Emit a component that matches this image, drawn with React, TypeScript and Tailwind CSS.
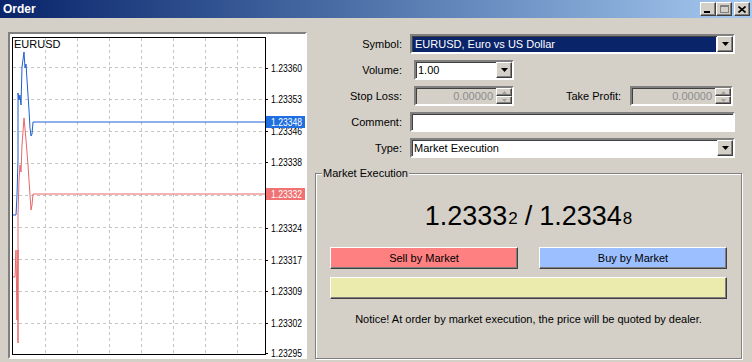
import React from 'react';

const raised = 'border border-t-white border-l-white border-r-[#404040] border-b-[#404040] shadow-[inset_-1px_-1px_0_#808080]';
const sunken = 'border-2 border-t-[#808080] border-l-[#808080] border-r-white border-b-white shadow-[inset_1px_1px_0_#404040]';

const priceLabels = [
    { y: 68, text: '1.23360' },
    { y: 99, text: '1.23353' },
    { y: 131, text: '1.23346' },
    { y: 162, text: '1.23338' },
    { y: 228, text: '1.23324' },
    { y: 260, text: '1.23317' },
    { y: 291, text: '1.23309' },
    { y: 323, text: '1.23302' },
    { y: 353, text: '1.23295' },
];

const gridX = [45, 77, 109, 141, 173, 205, 237];
const gridY = [67, 99, 131, 163, 195, 227, 259, 291, 323];

const bluePath = 'M13,215 L16,215 L17,195 L18,160 L18,93 L19,100 L20,95 L21,105 L22,67 L24,52 L25,68 L26,64 L27,80 L29,110 L30,128 L31,136 L32,134 L33,122 L265,122';
const redPath = 'M13,277 L15,277 L16,250 L17,320 L18,250 L18,343 L18,215 L19,180 L20,165 L21,172 L22,145 L24,118 L26,140 L28,165 L30,195 L31,210 L32,205 L33,194 L265,194';

const font = 'Liberation Sans, sans-serif';

const Chart = () => (
    <div className={`w-[299px] h-[327px] bg-white ${sunken}`}>
        <svg width="295" height="323" viewBox="10 34 295 323" className="block">
            <rect x="10" y="34" width="295" height="323" fill="white" />
            {gridX.map((x) => (
                <line key={x} x1={x + 0.5} y1="38" x2={x + 0.5} y2="354" stroke="#c4c4c4" strokeDasharray="3,3" />
            ))}
            {gridY.map((y) => (
                <line key={y} x1="13" y1={y + 0.5} x2="265" y2={y + 0.5} stroke="#c4c4c4" strokeDasharray="3,3" />
            ))}
            <rect x="12.5" y="37.5" width="253" height="317" fill="none" stroke="black" />
            {priceLabels.map((p) => (
                <g key={p.text}>
                    <line x1="265" y1={p.y + 0.5} x2="268" y2={p.y + 0.5} stroke="black" />
                    <text x="271" y={p.y + 4} fontSize="10.5" fontFamily={font} fill="black" textLength="31" lengthAdjust="spacingAndGlyphs">{p.text}</text>
                </g>
            ))}
            <path d={bluePath} fill="none" stroke="#1f5fd0" strokeWidth="1" />
            <path d={redPath} fill="none" stroke="#e86868" strokeWidth="1" />
            <rect x="266" y="116" width="39" height="12" fill="#1f6fe0" />
            <text x="271" y="126" fontSize="10.5" fontFamily={font} fill="white" textLength="31" lengthAdjust="spacingAndGlyphs">1.23348</text>
            <rect x="266" y="188" width="39" height="12" fill="#f07272" />
            <text x="271" y="198" fontSize="10.5" fontFamily={font} fill="white" textLength="31" lengthAdjust="spacingAndGlyphs">1.23332</text>
            <text x="14" y="48" fontSize="11" fontFamily={font} fill="black">EURUSD</text>
        </svg>
    </div>
);

const DropButton = () => (
    <div className={`w-[16px] h-[16px] bg-[#d4d0c8] flex items-center justify-center shrink-0 ${raised}`}>
        <svg width="7" height="4" viewBox="0 0 7 4">
            <path d="M0,0 L7,0 L3.5,4 Z" fill="black" />
        </svg>
    </div>
);

const Spinner = () => (
    <div className="w-[16px] h-[16px] flex flex-col shrink-0">
        <div className={`h-[8px] bg-[#d4d0c8] flex items-center justify-center ${raised}`}>
            <svg width="5" height="3" viewBox="0 0 5 3"><path d="M0,3 L5,3 L2.5,0 Z" fill="#a0a0a0" /></svg>
        </div>
        <div className={`h-[8px] bg-[#d4d0c8] flex items-center justify-center ${raised}`}>
            <svg width="5" height="3" viewBox="0 0 5 3"><path d="M0,0 L5,0 L2.5,3 Z" fill="#a0a0a0" /></svg>
        </div>
    </div>
);

const Label = ({ children, className = 'w-[88px]' }: { children: React.ReactNode; className?: string }) => (
    <div className={`${className} text-right pr-[1px] shrink-0`}>{children}</div>
);

const WinButton = ({ children, className = '' }: { children: React.ReactNode; className?: string }) => (
    <div className={`w-[16px] h-[14px] bg-[#d4d0c8] flex items-center justify-center ${raised} ${className}`}>{children}</div>
);

export default function App() {
    return (
        <div className="w-[752px] h-[362px] bg-[#d4d0c8] overflow-hidden text-[11px] text-black font-['Liberation_Sans',sans-serif] leading-[13px]">
            {/* Title bar */}
            <div className="h-[18px] flex items-center justify-between bg-gradient-to-r from-[#0a246a] to-[#a6caf0] pl-[3px] pr-[2px]">
                <span className="text-white font-bold text-[12px]">Order</span>
                <div className="flex items-center">
                    <WinButton>
                        <div className="w-[6px] h-[2px] bg-black mt-[6px] -ml-[2px]" />
                    </WinButton>
                    <WinButton>
                        <div className="w-[9px] h-[8px] border border-[#808080] border-t-2" />
                    </WinButton>
                    <WinButton className="ml-[2px]">
                        <svg width="8" height="7" viewBox="0 0 8 7">
                            <path d="M0.5,0.5 L7.5,6.5 M7.5,0.5 L0.5,6.5" stroke="black" strokeWidth="1.6" />
                        </svg>
                    </WinButton>
                </div>
            </div>

            <div className="flex pl-[8px] pt-[14px]">
                <Chart />

                <div className="ml-[8px] w-[427px]">
                    {/* Form */}
                    <div className="mt-[2px] flex flex-col gap-[6px]">
                        <div className="flex items-center h-[20px]">
                            <Label>Symbol:</Label>
                            <div className={`ml-[7px] w-[325px] h-[20px] bg-white flex items-center ${sunken}`}>
                                <div className="flex-1 h-[15px] ml-[1px] mr-[1px] bg-[#0a246a] text-white pl-[2px] flex items-center">EURUSD, Euro vs US Dollar</div>
                                <DropButton />
                            </div>
                        </div>
                        <div className="flex items-center h-[20px]">
                            <Label>Volume:</Label>
                            <div className={`ml-[11px] w-[100px] h-[20px] bg-white flex items-center ${sunken}`}>
                                <div className="flex-1 pl-[2px]">1.00</div>
                                <DropButton />
                            </div>
                        </div>
                        <div className="flex items-center h-[20px]">
                            <Label>Stop Loss:</Label>
                            <div className={`ml-[11px] w-[100px] h-[20px] bg-[#d4d0c8] flex items-center ${sunken}`}>
                                <div className="flex-1 text-right pr-[3px] text-[#8c8c8c]">0.00000</div>
                                <Spinner />
                            </div>
                            <Label className="w-[108px]">Take Profit:</Label>
                            <div className={`ml-[8px] w-[103px] h-[20px] bg-[#d4d0c8] flex items-center ${sunken}`}>
                                <div className="flex-1 text-right pr-[3px] text-[#8c8c8c]">0.00000</div>
                                <Spinner />
                            </div>
                        </div>
                        <div className="flex items-center h-[20px]">
                            <Label>Comment:</Label>
                            <div className={`ml-[7px] w-[325px] h-[20px] bg-white ${sunken}`} />
                        </div>
                        <div className="flex items-center h-[20px]">
                            <Label>Type:</Label>
                            <div className={`ml-[7px] w-[325px] h-[20px] bg-white flex items-center ${sunken}`}>
                                <div className="flex-1 pl-[2px]">Market Execution</div>
                                <DropButton />
                            </div>
                        </div>
                    </div>

                    {/* Market Execution group */}
                    <div className="relative mt-[15px] h-[186px] border border-[#808080] shadow-[1px_1px_0_white,inset_1px_1px_0_white] px-[14px]">
                        <span className="absolute -top-[7px] left-[6px] bg-[#d4d0c8] px-[1px]">Market Execution</span>
                        <div className="pt-[28px] h-[56px] flex items-center justify-center text-[27px] leading-[28px]">
                            <span>1.2333</span>
                            <span className="text-[17px] self-end leading-[22px] ml-[1px]">2</span>
                            <span className="mx-[7px]">/</span>
                            <span>1.2334</span>
                            <span className="text-[17px] self-end leading-[22px] ml-[1px]">8</span>
                        </div>
                        <div className="mt-[17px] flex justify-between">
                            <div className={`w-[188px] h-[22px] bg-[#ff8080] flex items-center justify-center ${raised}`}>Sell by Market</div>
                            <div className={`w-[188px] h-[22px] bg-[#9cbfff] flex items-center justify-center ${raised}`}>Buy by Market</div>
                        </div>
                        <div className={`mt-[8px] h-[22px] bg-[#ebebae] ${raised}`} />
                        <div className="mt-[13px] text-center leading-[14px]">
                            Notice! At order by market execution, the price will be quoted by dealer.
                        </div>
                    </div>
                </div>
            </div>
        </div>
    );
}
